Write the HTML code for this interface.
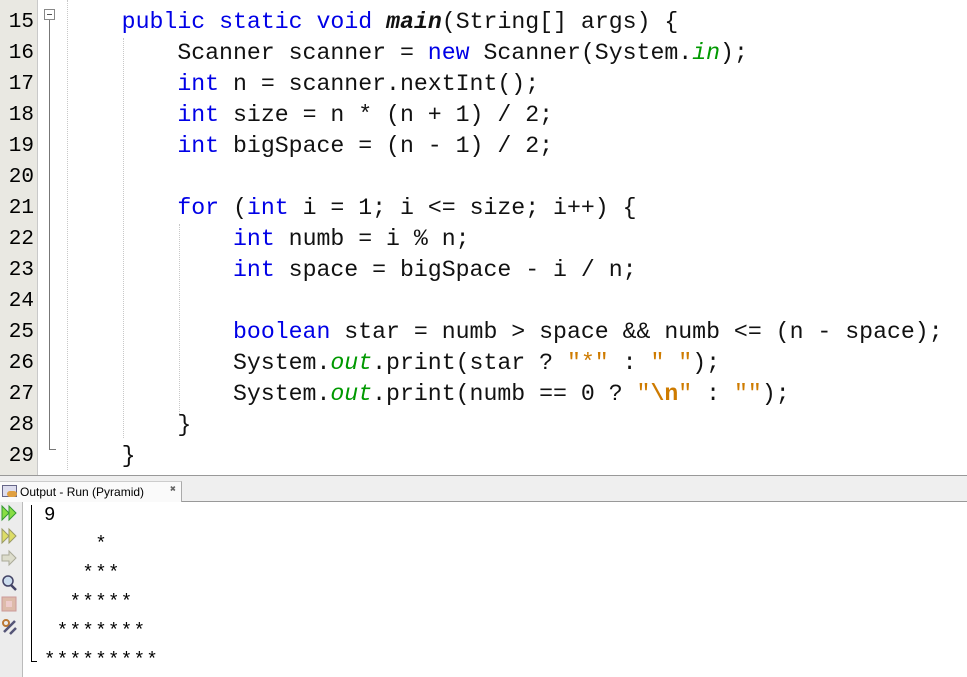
<!DOCTYPE html>
<html><head><meta charset="utf-8"><style>
body{margin:0;width:967px;height:677px;overflow:hidden;background:#fff;position:relative;font-family:"Liberation Mono",monospace}
.gut{position:absolute;left:0;top:0;width:37px;height:475px;background:#e9e8e2;border-right:1px solid #c9c9c9}
.ln{position:absolute;left:0;width:34px;text-align:right;font-size:21px;line-height:31px;color:#000}
.code{position:absolute;left:66px;font-size:23.2px;line-height:31px;white-space:pre;color:#111}
.k{color:#0000e6}.s{color:#ce7b00}.g{color:#009900;font-style:italic}.m{font-weight:bold;font-style:italic}
.guide{position:absolute;width:0;border-left:1px dotted #c8c8c8}
.out{position:absolute;left:44px;font-size:19px;letter-spacing:1.4px;line-height:29px;white-space:pre}
</style></head><body>
<div class="gut"></div>
<div style="position:absolute;left:44px;top:9px;width:9px;height:9px;border:1px solid #888;background:#fff"></div>
<div style="position:absolute;left:47px;top:14px;width:5px;height:1px;background:#555"></div>
<div style="position:absolute;left:49px;top:20px;width:1px;height:430px;background:#777"></div>
<div style="position:absolute;left:49px;top:449px;width:7px;height:1px;background:#777"></div>
<div class="guide" style="left:67px;top:0;height:470px"></div>
<div class="guide" style="left:123px;top:38px;height:400px"></div>
<div class="guide" style="left:179px;top:224px;height:190px"></div>
<div class="ln" style="top:7px">15</div><div class="ln" style="top:38px">16</div><div class="ln" style="top:69px">17</div><div class="ln" style="top:100px">18</div><div class="ln" style="top:131px">19</div><div class="ln" style="top:162px">20</div><div class="ln" style="top:193px">21</div><div class="ln" style="top:224px">22</div><div class="ln" style="top:255px">23</div><div class="ln" style="top:286px">24</div><div class="ln" style="top:317px">25</div><div class="ln" style="top:348px">26</div><div class="ln" style="top:379px">27</div><div class="ln" style="top:410px">28</div><div class="ln" style="top:441px">29</div>
<div class="code" style="top:7px">    <span class="k">public</span> <span class="k">static</span> <span class="k">void</span> <span class="m">main</span>(String[] args) {
        Scanner scanner = <span class="k">new</span> Scanner(System.<span class="g">in</span>);
        <span class="k">int</span> n = scanner.nextInt();
        <span class="k">int</span> size = n * (n + 1) / 2;
        <span class="k">int</span> bigSpace = (n - 1) / 2;

        <span class="k">for</span> (<span class="k">int</span> i = 1; i &lt;= size; i++) {
            <span class="k">int</span> numb = i % n;
            <span class="k">int</span> space = bigSpace - i / n;

            <span class="k">boolean</span> star = numb &gt; space &amp;&amp; numb &lt;= (n - space);
            System.<span class="g">out</span>.print(star ? <span class="s">"*"</span> : <span class="s">" "</span>);
            System.<span class="g">out</span>.print(numb == 0 ? <span class="s">"<b>\n</b>"</span> : <span class="s">""</span>);
        }
    }</div>
<div style="position:absolute;left:0;top:475px;width:967px;height:25px;background:#efefef;border-top:1px solid #999;border-bottom:1px solid #999"></div>
<div style="position:absolute;left:0;top:481px;width:181px;height:20px;background:#fafafa;border-right:1px solid #aaa;border-top:1px solid #ccc"></div>
<div style="position:absolute;left:2px;top:485px;width:13px;height:10px;border:1px solid #668;background:#dde"></div>
<div style="position:absolute;left:7px;top:491px;width:10px;height:6px;background:#e0a040;border-radius:3px"></div>
<div style="position:absolute;left:20px;top:483px;font-family:'Liberation Sans',sans-serif;font-size:12px;line-height:18px">Output - Run (Pyramid)</div>
<div style="position:absolute;left:170px;top:484px;font-size:10px;color:#666">✖</div>
<div style="position:absolute;left:0;top:502px;width:22px;height:175px;background:#ececec;border-right:1px solid #bbb"></div>
<svg style="position:absolute;left:0;top:502px" width="22" height="140">
<path d="M2 4 L9 11 L2 18 Z M9 4 L16 11 L9 18 Z" fill="#8d4" stroke="#393" stroke-width="1"/>
<path d="M2 27 L9 34 L2 41 Z M9 27 L16 34 L9 41 Z" fill="#dd6" stroke="#996" stroke-width="1"/>
<path d="M2 53 H9 V49 L16 56 L9 63 V59 H2 Z" fill="#ddc" stroke="#aa9"/>
<circle cx="8" cy="79" r="5" fill="#cde" stroke="#446" stroke-width="1.5"/><path d="M11 83 L16 88" stroke="#446" stroke-width="2.5"/>
<rect x="2" y="95" width="14" height="14" fill="#dba" stroke="#c99"/><rect x="6" y="99" width="6" height="6" fill="#ecc"/>
<circle cx="6" cy="121" r="3" fill="none" stroke="#b73" stroke-width="2"/><path d="M4 130 L15 119 M10 132 L16 126" stroke="#557" stroke-width="2.5"/>
</svg>
<div style="position:absolute;left:31px;top:505px;width:1px;height:157px;background:#000"></div>
<div style="position:absolute;left:31px;top:661px;width:6px;height:1px;background:#000"></div>
<div class="out" style="top:501px">9
    *
   ***
  *****
 *******
*********</div>
</body></html>
